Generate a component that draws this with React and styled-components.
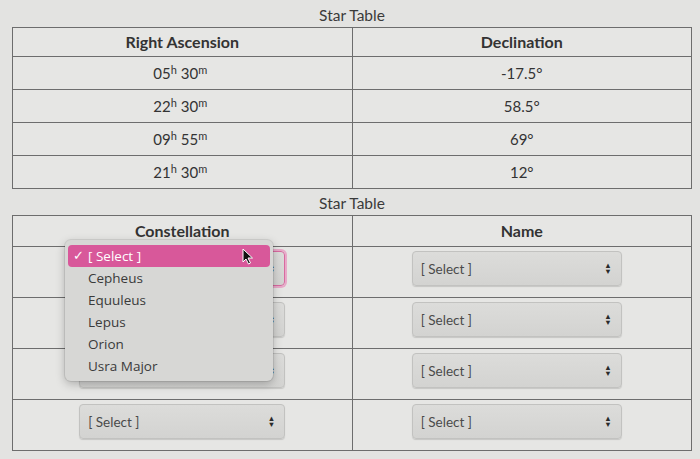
import React from 'react';
import styled, { createGlobalStyle } from 'styled-components';

const GlobalStyle = createGlobalStyle`
  html, body {
    margin: 0;
    padding: 0;
    background: #e3e3e1;
    font-family: Lato, "Open Sans", sans-serif;
    color: #2f2f2f;
  }
`;

const Page = styled.div`
  width: 700px;
  height: 459px;
  padding: 5px 8px 0 12px;
  box-sizing: border-box;
  overflow: hidden;
`;

const Caption = styled.div`
  text-align: center;
  font-size: 15.5px;
  line-height: 20px;
  color: #3a3a3a;
  margin-bottom: ${p => p.$gap || 2}px;
`;

const Table = styled.table`
  width: 680px;
  border-collapse: collapse;
  background: #e6e6e4;
  margin-bottom: ${p => p.$bottom || 0}px;
`;

const Th = styled.th`
  border: 1px solid #6d6d6d;
  font-weight: 700;
  font-size: 16px;
  line-height: 18px;
  color: #333;
  height: ${p => p.$h}px;
  padding: 0;
  width: 50%;
`;

const Td = styled.td`
  border: 1px solid #6d6d6d;
  text-align: center;
  font-size: 15px;
  line-height: 18px;
  height: ${p => p.$h}px;
  padding: ${p => p.$pad || '0'};
  vertical-align: ${p => p.$valign || 'middle'};
  box-sizing: border-box;
  position: relative;
  color: #333;
`;

const Sup = styled.sup`
  font-size: 11px;
  vertical-align: 5px;
  line-height: 0;
  margin-right: 4px;
`;

const SelectBox = styled.div`
  width: ${p => p.$w}px;
  height: 35px;
  margin: 0 auto;
  box-sizing: border-box;
  display: flex;
  align-items: center;
  justify-content: space-between;
  padding: 0 9px 0 8px;
  border: 1px solid ${p => (p.$focus ? '#d86aa0' : '#c2c2c0')};
  box-shadow: ${p => (p.$focus ? '0 0 0 2px #e8a9c8' : '0 1px 1px rgba(0,0,0,0.14)')};
  border-radius: 4px;
  background: linear-gradient(#dcdcda, #d3d3d1);
  font-size: 13.5px;
  color: #4a4a4a;
`;

const Arrows = styled.span`
  display: flex;
  flex-direction: column;
  align-items: center;
  font-size: 7.5px;
  line-height: 6px;
  color: #2a2a2a;
`;

const Menu = styled.div`
  position: absolute;
  left: 52px;
  top: -7px;
  width: 208px;
  padding: 5px 0 4px;
  box-sizing: border-box;
  background: #d7d7d5;
  border-radius: 6px;
  box-shadow: 0 3px 10px rgba(0,0,0,0.25), 0 0 0 1px rgba(0,0,0,0.08);
  text-align: left;
  z-index: 2;
  font-family: "Open Sans", Inter, sans-serif;
`;

const Item = styled.div`
  position: relative;
  height: 22px;
  line-height: 22px;
  margin: 0 3px;
  padding-left: 20px;
  border-radius: 4px;
  font-size: 13.5px;
  color: ${p => (p.$active ? '#fff' : '#3a3a3a')};
  background: ${p => (p.$active ? '#d8589a' : 'transparent')};
`;

const Check = styled.span`
  position: absolute;
  left: 5px;
  top: 0;
  font-size: 13px;
  font-family: "DejaVu Sans", sans-serif;
`;

const Cursor = styled.svg`
  position: absolute;
  right: 16px;
  top: 3px;
`;

const Select = ({ w, focus }) => (
  <SelectBox $w={w} $focus={focus}>
    <span>[ Select ]</span>
    <Arrows>
      <span>▲</span>
      <span>▼</span>
    </Arrows>
  </SelectBox>
);

const ra = [['05', '30'], ['22', '30'], ['09', '55'], ['21', '30']];
const dec = ['-17.5°', '58.5°', '69°', '12°'];
const options = ['Cepheus', 'Equuleus', 'Lepus', 'Orion', 'Usra Major'];

export default function App() {
  return (
    <Page>
      <GlobalStyle />
      <Caption>Star Table</Caption>
      <Table $bottom={4}>
        <thead>
          <tr>
            <Th $h={28}>Right Ascension</Th>
            <Th $h={28}>Declination</Th>
          </tr>
        </thead>
        <tbody>
          {ra.map(([h, m], i) => (
            <tr key={i}>
              <Td $h={33}>
                {h}<Sup>h</Sup>{m}<Sup>m</Sup>
              </Td>
              <Td $h={33}>{dec[i]}</Td>
            </tr>
          ))}
        </tbody>
      </Table>
      <Caption>Star Table</Caption>
      <Table>
        <thead>
          <tr>
            <Th $h={30}>Constellation</Th>
            <Th $h={30}>Name</Th>
          </tr>
        </thead>
        <tbody>
          {[0, 1, 2, 3].map(i => (
            <tr key={i}>
              <Td $h={51} $valign="top" $pad="4px 0 0 0">
                <Select w={206} focus={i === 0} />
                {i === 0 && (
                  <Menu>
                    <Item $active>
                      <Check>✓</Check>[ Select ]
                      <Cursor width="12" height="17" viewBox="0 0 12 17">
                        <path d="M1 1 L1 14 L4 11 L6.5 16 L8.5 15 L6 10 L10.5 10 Z" fill="#111" stroke="#fff" strokeWidth="1" />
                      </Cursor>
                    </Item>
                    {options.map(o => (
                      <Item key={o}>{o}</Item>
                    ))}
                  </Menu>
                )}
              </Td>
              <Td $h={51} $valign="top" $pad="4px 10px 0 0">
                <Select w={210} />
              </Td>
            </tr>
          ))}
        </tbody>
      </Table>
    </Page>
  );
}
